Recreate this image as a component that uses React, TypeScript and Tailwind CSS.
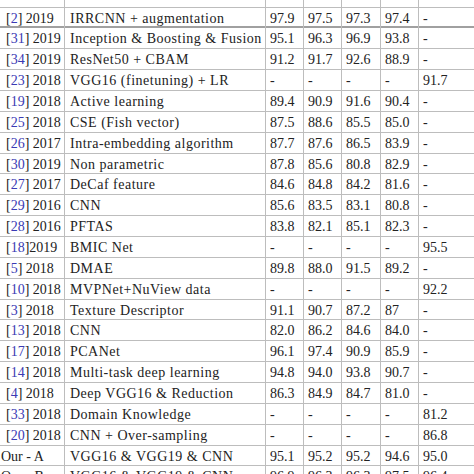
type Row = {
  ref?: string;
  year: string;
  method: string;
  vals: string[];
  thick?: boolean;
};

const rows: Row[] = [
  { ref: "2", year: " 2019", method: "IRRCNN + augmentation", vals: ["97.9", "97.5", "97.3", "97.4", "-"], thick: true },
  { ref: "31", year: " 2019", method: "Inception & Boosting & Fusion", vals: ["95.1", "96.3", "96.9", "93.8", "-"] },
  { ref: "34", year: " 2019", method: "ResNet50 + CBAM", vals: ["91.2", "91.7", "92.6", "88.9", "-"] },
  { ref: "23", year: " 2018", method: "VGG16 (finetuning) + LR", vals: ["-", "-", "-", "-", "91.7"] },
  { ref: "19", year: " 2018", method: "Active learning", vals: ["89.4", "90.9", "91.6", "90.4", "-"] },
  { ref: "25", year: " 2018", method: "CSE (Fish vector)", vals: ["87.5", "88.6", "85.5", "85.0", "-"] },
  { ref: "26", year: " 2017", method: "Intra-embedding algorithm", vals: ["87.7", "87.6", "86.5", "83.9", "-"] },
  { ref: "30", year: " 2019", method: "Non parametric", vals: ["87.8", "85.6", "80.8", "82.9", "-"] },
  { ref: "27", year: " 2017", method: "DeCaf feature", vals: ["84.6", "84.8", "84.2", "81.6", "-"] },
  { ref: "29", year: " 2016", method: "CNN", vals: ["85.6", "83.5", "83.1", "80.8", "-"] },
  { ref: "28", year: " 2016", method: "PFTAS", vals: ["83.8", "82.1", "85.1", "82.3", "-"] },
  { ref: "18", year: "2019", method: "BMIC Net", vals: ["-", "-", "-", "-", "95.5"] },
  { ref: "5", year: " 2018", method: "DMAE", vals: ["89.8", "88.0", "91.5", "89.2", "-"] },
  { ref: "10", year: " 2018", method: "MVPNet+NuView data", vals: ["-", "-", "-", "-", "92.2"] },
  { ref: "3", year: " 2018", method: "Texture Descriptor", vals: ["91.1", "90.7", "87.2", "87", "-"] },
  { ref: "13", year: " 2018", method: "CNN", vals: ["82.0", "86.2", "84.6", "84.0", "-"] },
  { ref: "17", year: " 2018", method: "PCANet", vals: ["96.1", "97.4", "90.9", "85.9", "-"] },
  { ref: "14", year: " 2018", method: "Multi-task deep learning", vals: ["94.8", "94.0", "93.8", "90.7", "-"] },
  { ref: "4", year: " 2018", method: "Deep VGG16 & Reduction", vals: ["86.3", "84.9", "84.7", "81.0", "-"] },
  { ref: "33", year: " 2018", method: "Domain Knowledge", vals: ["-", "-", "-", "-", "81.2"] },
  { ref: "20", year: " 2018", method: "CNN + Over-sampling", vals: ["-", "-", "-", "-", "86.8"] },
  { year: "Our - A", method: "VGG16 & VGG19 & CNN", vals: ["95.1", "95.2", "95.2", "94.6", "95.0"] },
  { year: "Our - B", method: "VGG16 & VGG19 & CNN", vals: ["96.9", "96.3", "96.3", "97.5", "96.4"] },
];

const grid = "grid grid-cols-[65px_201px_38px_38px_39px_38px_1fr]";
const cell = "border-r border-[#bdbdbd] flex items-center whitespace-pre";

export default function App() {
  return (
    <div
      className="w-[474px] h-[474px] overflow-hidden bg-white text-[14px] text-[#222]"
      style={{ fontFamily: '"Liberation Serif", "Times New Roman", serif' }}
    >
      {/* header row, cut off at the top */}
      <div className={`${grid} h-[7.5px] border-b border-[#bdbdbd]`}>
        {Array.from({ length: 7 }).map((_, i) => (
          <div key={i} className={i < 6 ? "border-r border-[#bdbdbd]" : ""} />
        ))}
      </div>

      {rows.map((r, i) => (
        <div
          key={i}
          className={`${grid} h-[20.87px] ${
            r.thick ? "border-b-2 border-[#a0a0a0]" : "border-b border-[#bdbdbd]"
          }`}
        >
          <div className={`${cell} ${r.ref ? "pl-[6px]" : "pl-[1px]"}`}>
            {r.ref && (
              <>
                [<span className="text-[#3a3ab4]">{r.ref}</span>]
              </>
            )}
            {r.year}
          </div>
          <div className={`${cell} pl-[5px] tracking-[0.5px]`}>{r.method}</div>
          {r.vals.map((v, j) => (
            <div
              key={j}
              className={`flex items-center whitespace-pre pl-[4px] ${
                j < 4 ? "border-r border-[#bdbdbd]" : ""
              }`}
            >
              {v}
            </div>
          ))}
        </div>
      ))}
    </div>
  );
}
